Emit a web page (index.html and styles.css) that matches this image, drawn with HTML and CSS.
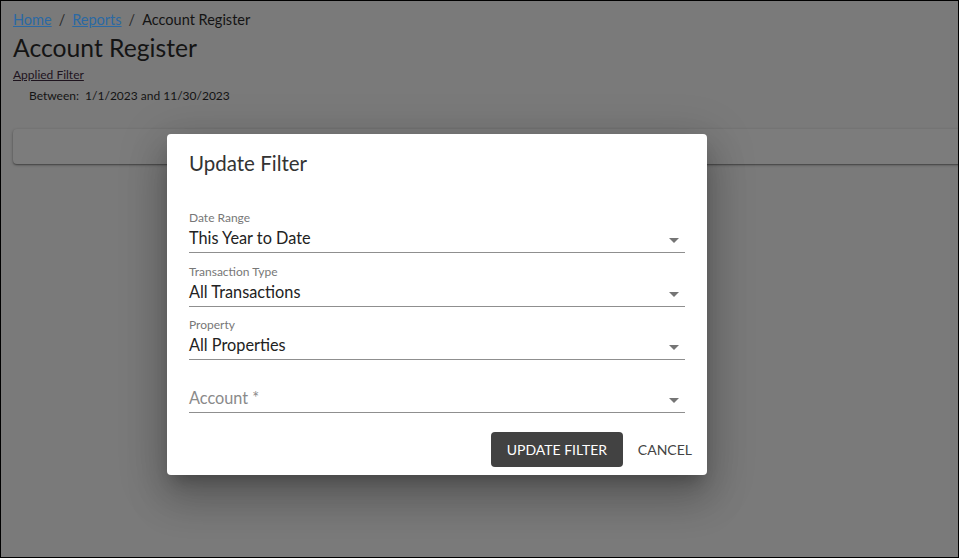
FILE: index.html
```html
<!DOCTYPE html>
<html lang="en">
<head>
<meta charset="utf-8">
<title>Account Register</title>
<link rel="stylesheet" href="styles.css">
</head>
<body>
<div class="frame">
  <nav class="crumbs">
    <a href="#" class="crumb-link">Home</a>
    <span class="sep">/</span>
    <a href="#" class="crumb-link">Reports</a>
    <span class="sep">/</span>
    <span class="crumb-current">Account Register</span>
  </nav>
  <h1 class="page-title">Account Register</h1>
  <a href="#" class="applied">Applied Filter</a>
  <div class="between">Between:&nbsp; 1/1/2023 and 11/30/2023</div>
  <div class="card"></div>

  <div class="dialog" role="dialog">
    <h2 class="dialog-title">Update Filter</h2>
    <div class="dialog-body">
      <div class="field">
        <div class="label">Date Range</div>
        <div class="value">This Year to Date</div>
        <span class="caret"></span>
      </div>
      <div class="field">
        <div class="label">Transaction Type</div>
        <div class="value">All Transactions</div>
        <span class="caret"></span>
      </div>
      <div class="field">
        <div class="label">Property</div>
        <div class="value">All Properties</div>
        <span class="caret"></span>
      </div>
      <div class="field empty">
        <div class="value placeholder">Account *</div>
        <span class="caret"></span>
      </div>
    </div>
    <div class="actions">
      <button class="btn primary">UPDATE FILTER</button>
      <button class="btn text">CANCEL</button>
    </div>
  </div>
</div>
</body>
</html>
```
FILE: styles.css
```css
* { box-sizing: border-box; }
html, body { margin: 0; padding: 0; }
body {
  font-family: Lato, "Open Sans", "Liberation Sans", sans-serif;
  width: 959px;
  height: 558px;
  overflow: hidden;
}
.frame {
  position: relative;
  width: 959px;
  height: 558px;
  border: 1px solid #000;
  background: #7a7a7a;
  padding: 10px 0 0 12px;
  color: #141414;
  overflow: hidden;
}
.crumbs {
  font-size: 14.5px;
  line-height: 18px;
  display: flex;
  gap: 7px;
  align-items: baseline;
}
.crumb-link { color: #2b69a4; text-decoration: underline; }
.sep { color: #2a2a2a; }
.crumb-current { color: #141414; }
.page-title {
  margin: 4px 0 0;
  font-size: 24.7px;
  font-weight: 400;
  line-height: 30px;
}
.applied {
  display: inline-block;
  margin-top: 3px;
  font-size: 12px;
  line-height: 15px;
  color: #1e141e;
  text-decoration: underline;
}
.between {
  margin: 6px 0 0 16px;
  font-size: 12px;
  line-height: 15px;
}
.card {
  margin-top: 26px;
  height: 35px;
  width: 960px;
  border-radius: 4px;
  background: #7c7c7c;
  box-shadow: 0 1px 3px rgba(0,0,0,0.35), 0 1px 1px rgba(0,0,0,0.2);
}
.dialog {
  position: absolute;
  left: 166px;
  top: 133px;
  width: 540px;
  height: 341px;
  background: #fff;
  border-radius: 4px;
  box-shadow: 0 11px 15px -7px rgba(0,0,0,0.25), 0 24px 38px 3px rgba(0,0,0,0.17), 0 9px 46px 8px rgba(0,0,0,0.14);
  padding: 16px 22px 8px;
  display: flex;
  flex-direction: column;
}
.dialog-title {
  margin: 0;
  font-size: 20.5px;
  font-weight: 400;
  line-height: 26px;
  color: #333;
}
.dialog-body {
  margin-top: 34px;
  display: flex;
  flex-direction: column;
  gap: 10px;
}
.field {
  position: relative;
  height: 43px;
  border-bottom: 1px solid #8f8f8f;
  display: flex;
  flex-direction: column;
  justify-content: flex-end;
  padding-bottom: 4px;
}
.field:nth-child(2) { margin-top: 1px; }
.label {
  font-size: 12px;
  line-height: 14px;
  color: #777;
  margin-bottom: 3px;
}
.value {
  font-size: 16.3px;
  line-height: 20px;
  color: #222;
}
.placeholder { color: #8a8a8a; }
.caret {
  position: absolute;
  right: 6px;
  bottom: 9px;
  width: 0;
  height: 0;
  border-left: 5px solid transparent;
  border-right: 5px solid transparent;
  border-top: 5px solid #757575;
}
.actions {
  margin-top: auto;
  display: flex;
  justify-content: flex-end;
  gap: 8px;
  margin-right: -14px;
}
.btn {
  font-family: inherit;
  font-size: 14px;
  height: 35px;
  border: 0;
  border-radius: 4px;
  cursor: pointer;
}
.btn.primary {
  background: #424242;
  color: #fff;
  width: 132px;
  padding: 0;
}
.btn.text {
  background: transparent;
  color: #444;
  padding: 0 7px;
}
```
